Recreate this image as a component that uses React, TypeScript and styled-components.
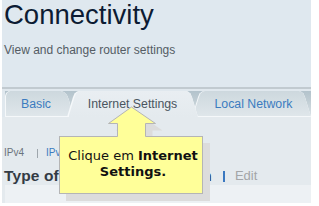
import React from "react";
import styled, { createGlobalStyle, css } from "styled-components";

const Global = createGlobalStyle`
  html, body { margin: 0; padding: 0; background: #ffffff; }
  body { font-family: "Liberation Sans", Arial, sans-serif; }
`;

const Root = styled.div`
  position: relative;
  width: 319px;
  height: 206px;
  overflow: hidden;
  background: #ffffff;
`;

const Panel = styled.div`
  margin-left: 2px;
  width: 309px;
  height: 203px;
  display: flex;
  flex-direction: column;
  background: #e4eaee;
`;

const Header = styled.header`
  flex: none;
  height: 89px;
  box-sizing: border-box;
  padding: 1px 0 0 2px;
  background: #dfe8ef;
  border-bottom: 2px solid #c1cad0;
`;

const Title = styled.h1`
  margin: 0;
  font-size: 27.5px;
  line-height: 28px;
  font-weight: normal;
  color: #0c1b33;
`;

const Subtitle = styled.p`
  margin: 14px 0 0;
  font-size: 12px;
  line-height: 14px;
  color: #545c64;
`;

const TabBar = styled.nav`
  flex: none;
  height: 28px;
  box-sizing: border-box;
  padding: 2px 0 0 3px;
  display: flex;
  background: #e0e8ee;
`;

const TabStrip = styled.div`
  flex: 1;
  display: flex;
  height: 26px;
  background: linear-gradient(to bottom, #b3c3cc 0, #bfccd3 9px, #dbe3e8 100%);
`;

const firstShape = css`
  clip-path: polygon(
    0 100%, 0 5px, 1px 2px, 4px 0,
    calc(100% - 12px) 0, calc(100% - 9px) 1px, calc(100% - 6px) 4px, calc(100% - 4px) 9px,
    100% 100%
  );
`;

const midShape = css`
  clip-path: polygon(
    0 100%, 6px 6px, 7.5px 2.5px, 10px 0.5px, 12px 0,
    calc(100% - 12px) 0, calc(100% - 10px) 0.5px, calc(100% - 7.5px) 2.5px, calc(100% - 6px) 6px,
    100% 100%
  );
`;

const Tab = styled.div<{ $active?: boolean; $first?: boolean; $w: number; $shift: number }>`
  position: relative;
  flex: none;
  box-sizing: border-box;
  width: ${(p) => p.$w}px;
  height: 26px;
  margin-left: ${(p) => (p.$first ? 0 : -6)}px;
  padding-left: ${(p) => Math.max(p.$shift, 0) * 2}px;
  padding-right: ${(p) => Math.max(-p.$shift, 0) * 2}px;
  z-index: ${(p) => (p.$active ? 2 : 1)};
  display: flex;
  align-items: center;
  justify-content: center;
  font-size: 12.3px;
  white-space: nowrap;
  color: ${(p) => (p.$active ? "#4a5560" : "#3b7cc0")};
  background: #f5f8fa;
  ${(p) => (p.$first ? firstShape : midShape)}

  &::before {
    content: "";
    position: absolute;
    top: 0;
    right: 0;
    bottom: ${(p) => (p.$active ? 0 : 1)}px;
    left: ${(p) => (p.$active ? 1.5 : 1)}px;
    z-index: -1;
    ${(p) => (p.$first ? firstShape : midShape)}
    background: ${(p) =>
      p.$active
        ? "linear-gradient(to bottom, #e9eef2, #e4eaee)"
        : "linear-gradient(to bottom, #cdd8de, #dfe6ea)"};
  }
`;

const Content = styled.section`
  flex: 1;
  display: flex;
  flex-direction: column;
  padding: 30px 0 0 2px;
`;

const SubNav = styled.div`
  display: flex;
  align-items: center;
  height: 12px;
  font-size: 10px;
  line-height: 12px;
`;

const SubLink = styled.span<{ $current?: boolean }>`
  color: ${(p) => (p.$current ? "#6b747c" : "#3b7cc0")};
`;

const Divider = styled.span<{ $strong?: boolean }>`
  flex: none;
  width: ${(p) => (p.$strong ? 2 : 1)}px;
  height: ${(p) => (p.$strong ? 11 : 9)}px;
  background: ${(p) => (p.$strong ? "#3a78c0" : "#9ea6ac")};
  margin: ${(p) => (p.$strong ? "0 10px 0 11px" : "0 8px 0 13px")};
`;

const SectionRow = styled.div`
  display: flex;
  align-items: center;
  margin-top: 8px;
  height: 18px;
  line-height: 18px;
`;

const SectionTitle = styled.h2`
  margin: 0;
  font-size: 15.5px;
  letter-spacing: 0.12px;
  font-weight: bold;
  color: #333b44;
  white-space: nowrap;
`;

const EditLink = styled.span`
  font-size: 13px;
  color: #a3a5a7;
`;

const Band = styled.div`
  height: 18px;
  margin-left: 1px;
  background: #edf1f4;
`;

const Callout = styled.div`
  position: absolute;
  left: 59px;
  top: 106px;
  width: 144px;
`;

const ArrowLayer = styled.svg<{ $front?: boolean }>`
  position: absolute;
  left: 0;
  top: 0;
  overflow: visible;
  z-index: ${(p) => (p.$front ? 2 : 0)};
`;

const Bubble = styled.div`
  position: relative;
  z-index: 1;
  margin-top: 30px;
  box-sizing: border-box;
  height: 58px;
  padding: 11px 2px 0 6px;
  background: #ffff99;
  border: 1px solid #b5b5b5;
  box-shadow: 7px 7px 0 #dcdcdc;
  font-family: "DejaVu Sans", Verdana, sans-serif;
  font-size: 13px;
  line-height: 16px;
  text-align: center;
  color: #111111;
`;

const ARROW_FILL = "M72.5 1 L96.5 17.5 L86.5 17.5 L86.5 31.5 L58.5 31.5 L58.5 17.5 L49.5 17.5 Z";
const ARROW_EDGE = "M58.5 30.5 L58.5 17.5 L49.5 17.5 L72.5 1 L96.5 17.5 L86.5 17.5 L86.5 30.5";

export default function App() {
  return (
    <Root>
      <Global />
      <Panel>
        <Header>
          <Title>Connectivity</Title>
          <Subtitle>View and change router settings</Subtitle>
        </Header>
        <TabBar>
          <TabStrip>
            <Tab $first $w={68} $shift={-3}>Basic</Tab>
            <Tab $active $w={131} $shift={0}>Internet Settings</Tab>
            <Tab $w={119} $shift={2}>Local Network</Tab>
          </TabStrip>
        </TabBar>
        <Content>
          <SubNav>
            <SubLink $current>IPv4</SubLink>
            <Divider />
            <SubLink>IPv6</SubLink>
          </SubNav>
          <SectionRow>
            <SectionTitle>Type of Internet Connection</SectionTitle>
            <Divider $strong />
            <EditLink>Edit</EditLink>
          </SectionRow>
          <Band />
        </Content>
      </Panel>
      <Callout>
        <ArrowLayer width="110" height="40">
          <path d={ARROW_FILL} transform="translate(7 7)" fill="#dcdcdc" />
        </ArrowLayer>
        <Bubble>
          Clique em <b>Internet</b>
          <br />
          <b>Settings.</b>
        </Bubble>
        <ArrowLayer $front width="110" height="40">
          <path d={ARROW_FILL} fill="#ffff99" />
          <path d={ARROW_EDGE} fill="none" stroke="#b5b5b5" strokeWidth="1" strokeLinejoin="miter" />
        </ArrowLayer>
      </Callout>
    </Root>
  );
}
